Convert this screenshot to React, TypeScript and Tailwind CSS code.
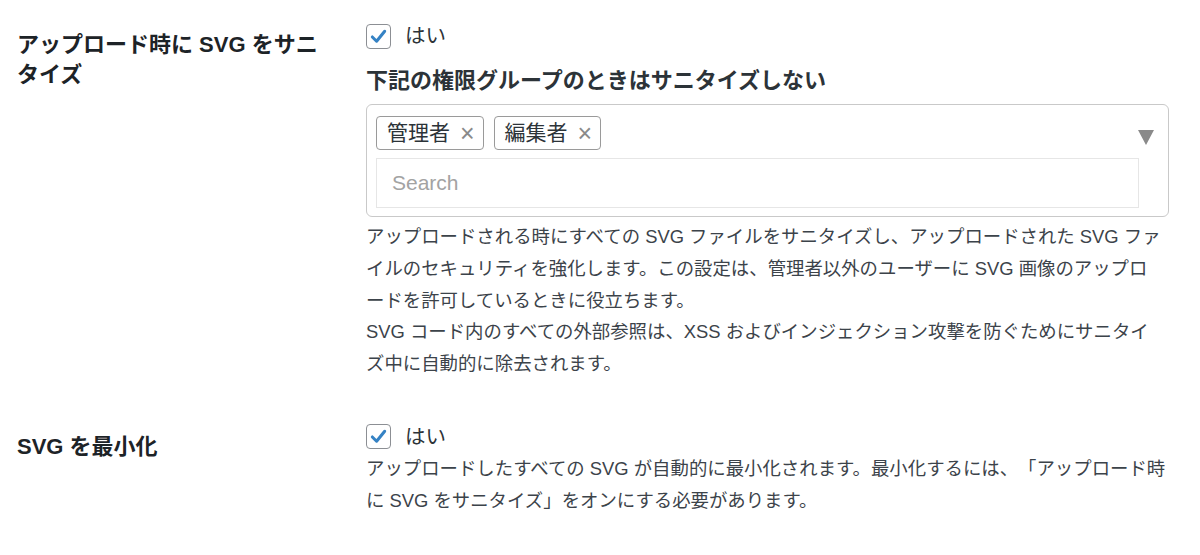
import React from "react";

function Check() {
  return (
    <div className="flex items-center h-[28px]">
      <span className="w-[25px] h-[25px] border border-[#8c8f94] rounded-[4px] bg-white flex items-center justify-center">
        <svg width="19" height="19" viewBox="0 0 20 20">
          <path d="M3.5 10.5 L8 15 L16.5 4.5" fill="none" stroke="#3582c4" strokeWidth="3.2" strokeLinecap="round" strokeLinejoin="round" />
        </svg>
      </span>
      <span className="ml-[14px] text-[20.5px] text-[#2c3338] leading-[28px]">はい</span>
    </div>
  );
}

function Tag({ label }: { label: string }) {
  return (
    <div className="h-[34px] border border-[#9a9a9a] rounded-[4px] bg-white flex items-center pl-[10px] pr-[8px]">
      <span className="text-[21px] text-[#2c3338] leading-[34px]">{label}</span>
      <span className="ml-[10px] text-[25px] text-[#8a8a8a] leading-[34px]">×</span>
    </div>
  );
}

export default function App() {
  return (
    <div className="w-[1200px] h-[555px] bg-white overflow-hidden font-['Liberation_Sans','Noto_Sans_CJK_JP',sans-serif] text-[#1d2327] [text-spacing-trim:space-all]">
      <div className="flex pt-[22px]">
        <div className="w-[366px] pl-[17px] pt-[8px] text-[22px] font-bold leading-[30px] text-[#1d2327]">
          アップロード時に SVG をサニ
          <br />
          タイズ
        </div>
        <div className="w-[803px]">
          <Check />
          <div className="mt-[16px] text-[22px] font-bold leading-[30px] text-[#2c3338]">
            下記の権限グループのときはサニタイズしない
          </div>
          <div className="relative mt-[8px] h-[113px] border-[1.5px] border-[#c9c9c9] rounded-[6px] pl-[9px] pr-[29px] pt-[11px]">
            <div className="flex gap-[10px]">
              <Tag label="管理者" />
              <Tag label="編集者" />
            </div>
            <div className="mt-[8px] h-[50px] border border-[#e6e6e6] pl-[15px] flex items-center text-[21px] text-[#a3a3a3]">
              Search
            </div>
            <svg className="absolute right-[14px] top-[24px]" width="16" height="16" viewBox="0 0 16 16">
              <polygon points="0,1 16,1 8,16" fill="#8a8a8a" />
            </svg>
          </div>
          <p className="mt-[4px] text-[18.4px] leading-[31.8px] text-[#3c434a] whitespace-nowrap">
            アップロードされる時にすべての SVG ファイルをサニタイズし、アップロードされた SVG ファ
            <br />
            イルのセキュリティを強化します。この設定は、管理者以外のユーザーに SVG 画像のアップロ
            <br />
            ードを許可しているときに役立ちます。
            <br />
            SVG コード内のすべての外部参照は、XSS およびインジェクション攻撃を防ぐためにサニタイ
            <br />
            ズ中に自動的に除去されます。
          </p>
        </div>
      </div>
      <div className="flex mt-[43px]">
        <div className="w-[366px] pl-[17px] pt-[9px] text-[22px] font-bold leading-[30px] text-[#1d2327]">
          SVG を最小化
        </div>
        <div className="w-[803px]">
          <Check />
          <p className="mt-[2px] text-[18.4px] leading-[31.8px] text-[#3c434a] whitespace-nowrap">
            アップロードしたすべての SVG が自動的に最小化されます。最小化するには、「アップロード時
            <br />
            に SVG をサニタイズ」をオンにする必要があります。
          </p>
        </div>
      </div>
    </div>
  );
}
